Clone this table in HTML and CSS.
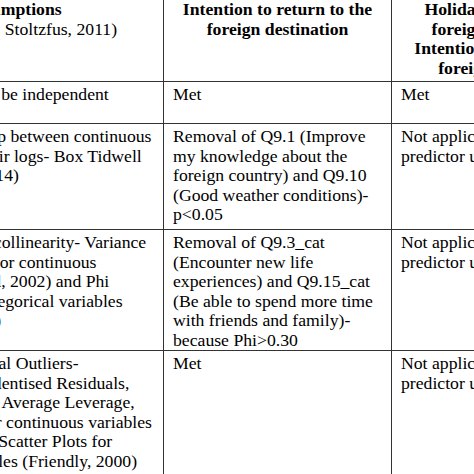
FILE: index.html
```html
<!DOCTYPE html>
<html lang="en">
<head>
<meta charset="utf-8">
<title>Logistic regression assumptions</title>
<link rel="stylesheet" href="styles.css">
</head>
<body>
<table class="grid">
  <colgroup>
    <col class="col-assume">
    <col class="col-return">
    <col class="col-holiday">
  </colgroup>
  <thead>
    <tr class="row-head">
      <th>Assumptions<br><span class="cite">(Field, 2009; Stoltzfus, 2011)</span></th>
      <th>Intention to return to the foreign destination</th>
      <th>Holiday satisfaction in<br>foreign destination –<br>Intention to return to the<br>foreign destination</th>
    </tr>
  </thead>
  <tbody>
    <tr class="row-1">
      <td class="label">Residuals need to be independent</td>
      <td>Met</td>
      <td>Met</td>
    </tr>
    <tr class="row-2">
      <td class="label">Linear relationship between continuous<br>predictors and their logs- Box Tidwell<br>tests (Menard, 2014)</td>
      <td>Removal of Q9.1 (Improve my knowledge about the foreign country) and Q9.10 (Good weather conditions)-<wbr>p&lt;0.05</td>
      <td>Not applicable- no continuous predictor used</td>
    </tr>
    <tr class="row-3">
      <td class="label">Absence of multicollinearity- Variance<br>Inflation Factors for continuous<br>variables (Menard, 2002) and Phi<br>coefficient for categorical variables<br>(Midi et al., 2010)</td>
      <td>Removal of Q9.3_cat (Encounter new life experiences) and Q9.15_cat (Be able to spend more time with friends and family)-<wbr>because Phi&gt;0.30</td>
      <td>Not applicable- only one predictor used</td>
    </tr>
    <tr class="row-4">
      <td class="label">Tests for Influential Outliers-<br>Inspection of Studentised Residuals,<br>Cook's Distances, Average Leverage,<br>DFBeta values for continuous variables<br>Mosaic Plots and Scatter Plots for<br>categorical variables (Friendly, 2000)</td>
      <td>Met</td>
      <td>Not applicable- only one predictor used</td>
    </tr>
  </tbody>
</table>
</body>
</html>
```
FILE: styles.css
```css
html, body {
  margin: 0;
  padding: 0;
  background: #fff;
  overflow: hidden;
}

body {
  width: 474px;
  height: 474px;
}

.grid {
  border-collapse: collapse;
  table-layout: fixed;
  width: 764px;
  margin: -4px 0 0 -138px;
  font-family: "Liberation Serif", "Times New Roman", serif;
  font-size: 17.7px;
  line-height: 19.5px;
  color: #000;
}

.col-assume { width: 301px; }
.col-return { width: 228px; }
.col-holiday { width: 235px; }

.grid th,
.grid td {
  border: 1px solid #333;
  padding: 3px 9px 0 9px;
  vertical-align: top;
  text-align: left;
}

.grid th {
  text-align: center;
  font-weight: 700;
}

.cite {
  font-weight: 400;
}

.label {
  white-space: nowrap;
}

.row-head { height: 85px; }
.row-1 { height: 42px; }
.row-2 { height: 106px; }
.row-3 { height: 121px; }
.row-4 { height: 140px; }
```
